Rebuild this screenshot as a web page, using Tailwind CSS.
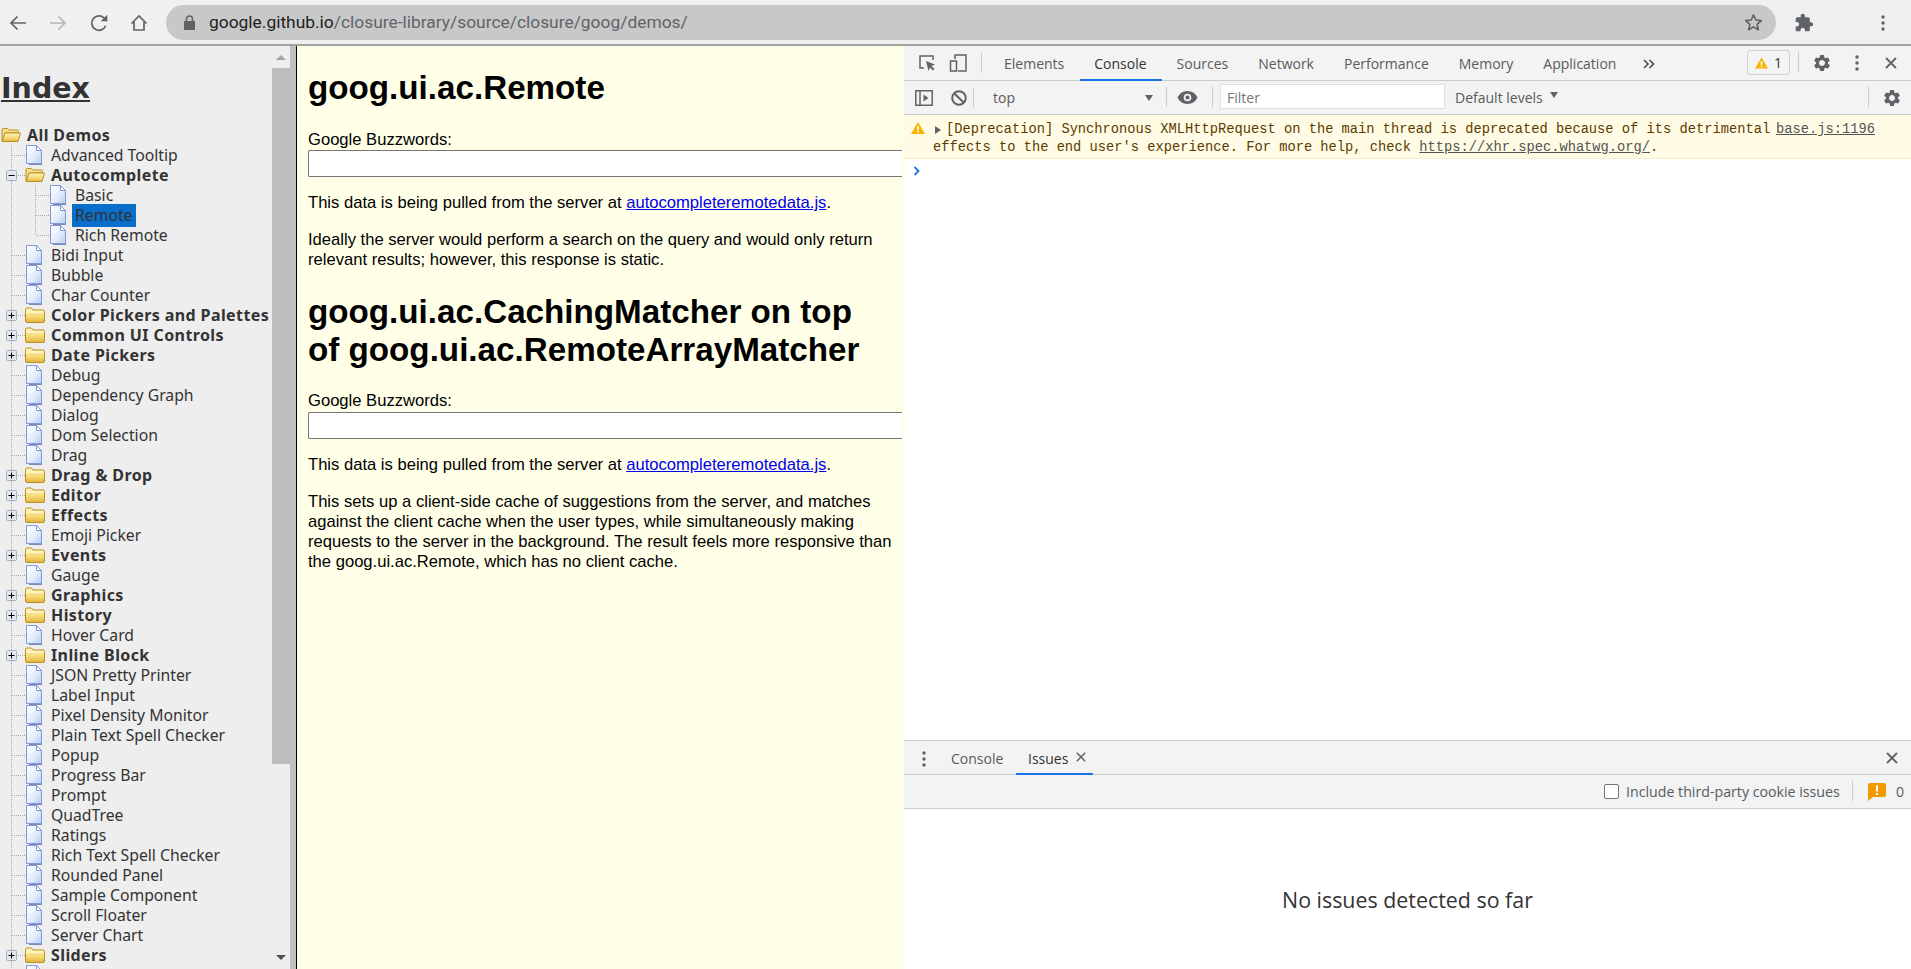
<!DOCTYPE html>
<html lang="en">
<head>
  <meta charset="UTF-8"/>
  <title>goog.ui.ac.Remote</title>
  <script src="https://cdn.jsdelivr.net/npm/@tailwindcss/browser@4"></script>
</head>
<body class="w-[1911px] h-[969px] overflow-hidden bg-white font-['Open_Sans',sans-serif]">

  <!-- shared icons -->
  <svg class="absolute w-0 h-0">
    <defs>
      <linearGradient id="pageFill" x1="0" y1="0" x2="1" y2="1">
        <stop offset="0" stop-color="#ffffff"/><stop offset="0.55" stop-color="#e4edfb"/><stop offset="1" stop-color="#b4cbf0"/>
      </linearGradient>
      <linearGradient id="folderFill" x1="0" y1="0" x2="0" y2="1">
        <stop offset="0" stop-color="#fff6c2"/><stop offset="0.6" stop-color="#f5d873"/><stop offset="1" stop-color="#e2b23c"/>
      </linearGradient>
    </defs>
    <symbol id="page" viewBox="0 0 17 20">
      <path d="M3 3h8l5 5v12H3z" fill="#7d88b5"/>
      <path d="M.5.5h10l5 5v13H.5z" fill="url(#pageFill)" stroke="#7f9ad6"/>
      <path d="M10.500.5v5h5z" fill="#fff" stroke="#7f9ad6"/>
    </symbol>
    <symbol id="folderOpen" viewBox="0 0 20 16">
      <path d="M1 14V3q0-1.500 1.500-1.500h4L8 3h8q1.500 0 1.500 1.500V6H4z" fill="#f7e08c" stroke="#b98f22"/>
      <path d="M1 14.500 4 6h15.500l-2.500 8.500z" fill="url(#folderFill)" stroke="#b98f22" stroke-linejoin="round"/>
    </symbol>
    <symbol id="folderClosed" viewBox="0 0 20 16">
      <path d="M.5 14V2.500q0-1.500 1.500-1.500h4.500L8 3h10q1.500 0 1.500 1.500V14q0 1.500-1.500 1.500H2Q.5 15.500.5 14z" fill="url(#folderFill)" stroke="#b98f22"/>
      <path d="M1 5h18" stroke="#fff8d0" stroke-width="1.500"/>
    </symbol>
    <symbol id="gear" viewBox="0 0 24 24">
      <path d="M19.14 12.94c.04-.3.06-.61.06-.94 0-.32-.02-.64-.07-.94l2.03-1.58a.49.49 0 0 0 .12-.61l-1.92-3.32a.488.488 0 0 0-.59-.22l-2.39.96c-.5-.38-1.03-.7-1.62-.94l-.36-2.54a.484.484 0 0 0-.48-.41h-3.84c-.24 0-.43.17-.47.41l-.36 2.54c-.59.24-1.13.57-1.62.94l-2.39-.96c-.22-.08-.47 0-.59.22L2.74 8.87c-.12.21-.08.47.12.61l2.03 1.58c-.05.3-.09.63-.09.94s.02.64.07.94l-2.03 1.58a.49.49 0 0 0-.12.61l1.92 3.32c.12.22.37.29.59.22l2.39-.96c.5.38 1.03.7 1.62.94l.36 2.54c.05.24.24.41.48.41h3.84c.24 0 .44-.17.47-.41l.36-2.54c.59-.24 1.13-.56 1.62-.94l2.39.96c.22.08.47 0 .59-.22l1.92-3.32c.12-.22.07-.47-.12-.61l-2.01-1.58zM12 15.6c-1.98 0-3.6-1.62-3.6-3.6s1.62-3.6 3.6-3.6 3.6 1.62 3.6 3.6-1.62 3.6-3.6 3.6z"/>
    </symbol>
    <symbol id="dots" viewBox="0 0 4 16">
      <circle cx="2" cy="2" r="1.700"/><circle cx="2" cy="8" r="1.700"/><circle cx="2" cy="14" r="1.700"/>
    </symbol>
    <symbol id="cross" viewBox="0 0 12 12">
      <path d="M1 1l10 10M11 1 1 11" stroke="currentColor" stroke-width="1.800" fill="none"/>
    </symbol>
    <symbol id="warnTri" viewBox="0 0 14 12">
      <path d="M7 0 14 12H0z" fill="#f4b400"/>
      <path d="M6.200 4h1.600v4.200H6.200zM6.200 9h1.600v1.500H6.200z" fill="#fff"/>
    </symbol>
  </svg>

  <!-- BROWSER TOOLBAR -->
  <div class="h-[46px] bg-[#f0f0f0] border-b-[2px] border-[#a3a3a3] flex items-center relative">
    <svg class="absolute left-[9px] top-[14px] w-[18px] h-[18px] text-[#5f6368]" viewBox="0 0 18 18" fill="none" stroke="currentColor" stroke-width="1.700"><path d="M17 9H2M8.500 2.500 2 9l6.500 6.500"/></svg>
    <svg class="absolute left-[49px] top-[14px] w-[18px] h-[18px] text-[#b5b5b5]" viewBox="0 0 18 18" fill="none" stroke="currentColor" stroke-width="1.700"><path d="M1 9h15M9.500 2.500 16 9l-6.500 6.500"/></svg>
    <svg class="absolute left-[89px] top-[13px] w-[20px] h-[20px] text-[#5f6368]" viewBox="0 0 18 18" fill="none" stroke="currentColor" stroke-width="1.600"><path d="M15 11.500A6.500 6.500 0 1 1 13.600 4.500L16 7"/><path d="M16.500 1.500V7.500H10.500" stroke="none" fill="currentColor"/></svg>
    <svg class="absolute left-[130px] top-[14px] w-[18px] h-[18px] text-[#5f6368]" viewBox="0 0 18 18" fill="none" stroke="currentColor" stroke-width="1.700"><path d="M1.500 9.500 9 2l7.500 7.500M4 8v8h10V8"/></svg>

    <div class="absolute left-[166px] top-[5px] w-[1610px] h-[35px] rounded-full bg-[#c8c8c8] flex items-center">
      <svg class="ml-[18px] w-[11px] h-[15px] text-[#5f6368]" viewBox="0 0 11 15" fill="currentColor"><path d="M0 6h11v9H0z"/><path d="M2.500 6V4a3 3 0 0 1 6 0v2" fill="none" stroke="currentColor" stroke-width="1.500"/></svg>
      <span class="ml-[14px] text-[17.400px] leading-none font-['Roboto',sans-serif] text-[#202124]">google.github.io<span class="text-[#5f6368]">/closure-library/source/closure/goog/demos/</span></span>
      <svg class="absolute right-[13px] top-[8px] w-[19px] h-[19px] text-[#5f6368]" viewBox="0 0 20 20" fill="none" stroke="currentColor" stroke-width="1.700" stroke-linejoin="round"><path d="m10 2 2.400 5.400 5.800.6-4.400 3.900 1.300 5.700-5.100-3-5.100 3 1.300-5.700L1.800 8l5.800-.6z"/></svg>
    </div>
    <svg class="absolute left-[1794px] top-[13px] w-[20px] h-[20px] text-[#5f6368]" viewBox="0 0 24 24" fill="currentColor"><path d="M20.500 11H19V7c0-1.100-.9-2-2-2h-4V3.500C13 2.120 11.880 1 10.500 1S8 2.120 8 3.500V5H4c-1.100 0-1.990.9-1.990 2v3.800H3.500c1.490 0 2.700 1.210 2.700 2.700s-1.210 2.700-2.700 2.700H2V20c0 1.100.9 2 2 2h3.800v-1.500c0-1.490 1.210-2.700 2.700-2.700 1.490 0 2.700 1.210 2.700 2.700V22H17c1.100 0 2-.9 2-2v-4h1.500c1.380 0 2.500-1.120 2.500-2.500S21.880 11 20.500 11z"/></svg>
    <svg class="absolute left-[1881px] top-[15px] w-[4px] h-[16px] fill-[#5f6368]"><use href="#dots"/></svg>
  </div>

  <div class="flex h-[923px]">

    <!-- LEFT: demo index -->
    <div class="w-[297px] shrink-0 flex bg-[#eeeeee] border-r border-black">
      <div class="w-[272px] shrink-0 overflow-hidden font-['Noto_Sans',sans-serif] text-[#333]">
        <h1 class="mt-[20px] mb-[13px] ml-px text-[28.500px] leading-[46px] font-bold underline font-['DejaVu_Sans',sans-serif]">Index</h1>
        <div id="tree"></div>
      </div>
      <div class="w-[18px] shrink-0 flex flex-col items-center">
        <div class="h-[22px] w-full flex items-center justify-center"><div class="w-0 h-0 border-x-[5px] border-x-transparent border-b-[5px] border-b-[#a3a3a3]"></div></div>
        <div class="h-[696px] w-full bg-[#bdbdbd]"></div>
        <div class="flex-1 w-full flex items-end justify-center pb-[9px]"><div class="w-0 h-0 border-x-[5px] border-x-transparent border-t-[5px] border-t-[#505050]"></div></div>
      </div>
      <div class="flex-1 bg-[#c0c0c0]"></div>
    </div>

    <!-- MIDDLE: demo page -->
    <div class="w-[607px] shrink-0 bg-[#ffffe8] overflow-hidden pl-[11px] text-black font-['Liberation_Sans',sans-serif] text-[16.600px] leading-[20px]">
      <h1 class="mt-[23px] text-[33.200px] leading-[38px] font-bold">goog.ui.ac.Remote</h1>
      <div class="mt-[23px]">Google Buzzwords:</div>
      <input class="block w-[594px] h-[27px] bg-white border border-r-0 border-[#767676] rounded-l-[2px]"/>
      <p class="mt-[16px]">This data is being pulled from the server at <a class="text-[#0000ee] underline">autocompleteremotedata.js</a>.</p>
      <p class="mt-[17px] w-[592px]">Ideally the server would perform a search on the query and would only return relevant results; however, this response is static.</p>
      <h1 class="mt-[23px] w-[575px] text-[33.200px] leading-[38px] font-bold">goog.ui.ac.CachingMatcher on top of goog.ui.ac.RemoteArrayMatcher</h1>
      <div class="mt-[22px]">Google Buzzwords:</div>
      <input class="block mt-px w-[594px] h-[27px] bg-white border border-r-0 border-[#767676] rounded-l-[2px]"/>
      <p class="mt-[16px]">This data is being pulled from the server at <a class="text-[#0000ee] underline">autocompleteremotedata.js</a>.</p>
      <p class="mt-[17px] w-[592px]">This sets up a client-side cache of suggestions from the server, and matches against the client cache when the user types, while simultaneously making requests to the server in the background. The result feels more responsive than the goog.ui.ac.Remote, which has no client cache.</p>
    </div>

    <!-- RIGHT: devtools -->
    <div class="flex-1 min-w-0 flex flex-col bg-white text-[14px] text-[#5a5a5a]">

      <!-- tab bar -->
      <div class="h-[35px] shrink-0 bg-[#f3f3f3] border-b border-[#cccccc] flex items-center relative">
        <svg class="ml-[14px] w-[19px] h-[19px] text-[#5f6368]" viewBox="0 0 19 19" fill="none" stroke="currentColor" stroke-width="1.500"><path d="M6 14H2V2h13v4"/><path d="m8 7 9 3.500-3.500 1.500 3 3-1.500 1.500-3-3L10.500 17z" fill="currentColor" stroke="none"/></svg>
        <svg class="ml-[12px] w-[19px] h-[20px] text-[#5f6368]" viewBox="0 0 19 20" fill="none" stroke="currentColor" stroke-width="1.500"><path d="M6 6V2h11v16H9"/><path d="M1.500 8h6v10h-6z"/></svg>
        <div class="w-px h-[20px] bg-[#ccc] ml-[13px]"></div>
        <div class="ml-[22px] flex gap-[30px] h-full items-center">
          <span>Elements</span>
          <span class="relative h-full flex items-center text-[#333]">Console<span class="absolute -left-[14px] -right-[15px] bottom-[-1px] h-[2px] bg-[#1a73e8]"></span></span>
          <span>Sources</span>
          <span>Network</span>
          <span>Performance</span>
          <span>Memory</span>
          <span>Application</span>
        </div>
        <svg class="absolute left-[739px] top-[13px] w-[12px] h-[10px] text-[#444]" viewBox="0 0 12 10" fill="none" stroke="currentColor" stroke-width="1.500"><path d="m1 1 4 4-4 4M6.500 1l4 4-4 4"/></svg>
        <div class="absolute left-[843px] top-[4px] w-[43px] h-[25px] border border-[#d0d0d0] rounded-[3px] flex items-center justify-center gap-[6px] text-[#333]">
          <svg class="w-[13px] h-[12px]"><use href="#warnTri"/></svg><span>1</span>
        </div>
        <div class="absolute left-[894px] top-[6px] w-px h-[20px] bg-[#ccc]"></div>
        <svg class="absolute left-[908px] top-[7px] w-[20px] h-[20px] fill-[#5f6368]"><use href="#gear"/></svg>
        <svg class="absolute left-[951px] top-[9px] w-[4px] h-[16px] fill-[#5f6368]"><use href="#dots"/></svg>
        <svg class="absolute left-[981px] top-[11px] w-[12px] h-[12px] text-[#5f6368]"><use href="#cross"/></svg>
      </div>

      <!-- console filter bar -->
      <div class="h-[34px] shrink-0 bg-[#f3f3f3] border-b border-[#cccccc] flex items-center relative">
        <svg class="ml-[11px] w-[18px] h-[16px] text-[#5f6368]" viewBox="0 0 18 16" fill="none" stroke="currentColor" stroke-width="1.500"><path d="M.8.800h16.400v14.400H.8zM5 1v14"/><path d="m8.500 4.500 5 3.500-5 3.500z" fill="currentColor" stroke="none"/></svg>
        <svg class="ml-[18px] w-[16px] h-[16px] text-[#5f6368]" viewBox="0 0 16 16" fill="none" stroke="currentColor" stroke-width="2"><circle cx="8" cy="8" r="6.800"/><path d="m3.200 3.200 9.600 9.600"/></svg>
        <div class="w-px h-[20px] bg-[#ccc] ml-[6px]"></div>
        <span class="ml-[19px]">top</span>
        <div class="absolute left-[241px] top-[14px] w-0 h-0 border-x-[4px] border-x-transparent border-t-[6px] border-t-[#5f6368]"></div>
        <div class="absolute left-[262px] top-[6px] w-px h-[20px] bg-[#ccc]"></div>
        <svg class="absolute left-[273px] top-[9px] w-[21px] h-[15px] fill-[#5f6368]" viewBox="0 0 21 15"><path d="M10.500 1C6 1 2.200 3.800.5 7.500 2.200 11.200 6 14 10.500 14s8.300-2.800 10-6.500C18.800 3.800 15 1 10.500 1z"/><circle cx="10.500" cy="7.500" r="3.800" fill="#f3f3f3"/><circle cx="10.500" cy="7.500" r="2"/></svg>
        <div class="absolute left-[308px] top-[6px] w-px h-[20px] bg-[#ccc]"></div>
        <div class="absolute left-[316px] top-[3px] w-[225px] h-[25px] bg-white border border-[#e0e0e0] pl-[6px] pt-px flex items-center text-[#757575]">Filter</div>
        <span class="absolute left-[551px] top-[6px]">Default levels</span>
        <div class="absolute left-[646px] top-[11px] w-0 h-0 border-x-[4px] border-x-transparent border-t-[6px] border-t-[#5f6368]"></div>
        <div class="absolute left-[964px] top-[6px] w-px h-[20px] bg-[#ccc]"></div>
        <svg class="absolute left-[978px] top-[7px] w-[20px] h-[20px] fill-[#5f6368]"><use href="#gear"/></svg>
      </div>

      <!-- console output -->
      <div class="h-[625px] shrink-0 flex flex-col font-['Liberation_Mono',monospace] text-[13.740px] leading-[18px]">
        <div class="h-[44px] bg-[#fffbe5] border-b border-[#f5eecb] relative text-[#5c3b00] pt-[6px] pl-[29px]">
          <svg class="absolute left-[7px] top-[7px] w-[14px] h-[12px]"><use href="#warnTri"/></svg>
          <div class="absolute left-[31px] top-[11px] w-0 h-0 border-y-[4px] border-y-transparent border-l-[6px] border-l-[#5f6368]"></div>
          <div class="pl-[13px] whitespace-nowrap">[Deprecation] Synchronous XMLHttpRequest on the main thread is deprecated because of its detrimental</div>
          <div class="whitespace-nowrap">effects to the end user's experience. For more help, check <a class="underline text-[#555]">https://xhr.spec.whatwg.org/</a>.</div>
          <a class="absolute right-[36px] top-[6px] underline text-[#555]">base.js:1196</a>
        </div>
        <svg class="ml-[9px] mt-[7px] w-[8px] h-[10px] text-[#1a73e8]" viewBox="0 0 8 10" fill="none" stroke="currentColor" stroke-width="1.800"><path d="m1.500 1 4 4-4 4"/></svg>
      </div>

      <!-- drawer tabs -->
      <div class="h-[35px] shrink-0 bg-[#f3f3f3] border-y border-[#cccccc] flex items-center relative">
        <svg class="absolute left-[18px] top-[10px] w-[4px] h-[16px] fill-[#5f6368]"><use href="#dots"/></svg>
        <span class="absolute left-[47px] top-[7px]">Console</span>
        <span class="absolute left-[124px] top-[7px] text-[#333]">Issues</span>
        <svg class="absolute left-[172px] top-[11px] w-[10px] h-[10px] text-[#5f6368]"><use href="#cross"/></svg>
        <div class="absolute left-[112px] bottom-[-1px] w-[77px] h-[2px] bg-[#1a73e8]"></div>
        <svg class="absolute left-[982px] top-[11px] w-[12px] h-[12px] text-[#5f6368]"><use href="#cross"/></svg>
      </div>

      <!-- issues toolbar -->
      <div class="h-[34px] shrink-0 bg-[#f1f3f4] border-b border-[#cccccc] flex items-center justify-end relative">
        <div class="absolute left-[700px] top-[9px] w-[15px] h-[15px] bg-white border border-[#767676] rounded-[2px]"></div>
        <span class="absolute left-[722px] top-[6px] text-[14.200px]">Include third-party cookie issues</span>
        <div class="absolute left-[948px] top-[6px] w-px h-[20px] bg-[#ccc]"></div>
        <svg class="absolute left-[964px] top-[8px] w-[18px] h-[18px]" viewBox="0 0 18 18"><path d="M2 0h14q2 0 2 2v10q0 2-2 2H5l-5 4V2q0-2 2-2z" fill="#f29900"/><path d="M8 2.500h2v6H8zM8 10h2v2H8z" fill="#fff"/></svg>
        <span class="absolute left-[992px] top-[6px]">0</span>
      </div>

      <!-- issues empty state -->
      <div class="flex-1 pt-[77px] text-center text-[21.400px] leading-[27px] text-[#333]">No issues detected so far</div>
    </div>
  </div>

  <script>
    // Demo index rows: [label, kind] kind: f folder, o open folder, p page, s/r/e sub pages
    const rows = [
      ['Advanced Tooltip','p'],['Autocomplete','o'],['Basic','s'],['Remote','r'],['Rich Remote','e'],
      ['Bidi Input','p'],['Bubble','p'],['Char Counter','p'],['Color Pickers and Palettes','f'],
      ['Common UI Controls','f'],['Date Pickers','f'],['Debug','p'],['Dependency Graph','p'],['Dialog','p'],
      ['Dom Selection','p'],['Drag','p'],['Drag &amp; Drop','f'],['Editor','f'],['Effects','f'],['Emoji Picker','p'],
      ['Events','f'],['Gauge','p'],['Graphics','f'],['History','f'],['Hover Card','p'],['Inline Block','f'],
      ['JSON Pretty Printer','p'],['Label Input','p'],['Pixel Density Monitor','p'],['Plain Text Spell Checker','p'],
      ['Popup','p'],['Progress Bar','p'],['Prompt','p'],['QuadTree','p'],['Ratings','p'],['Rich Text Spell Checker','p'],
      ['Rounded Panel','p'],['Sample Component','p'],['Scroll Floater','p'],['Server Chart','p'],['Sliders','f'],['Spinner','p'],
    ];
    const dotted = 'stroke="#a8a8a8" stroke-dasharray="1 1"';
    const box = sign => `<rect x="6.500" y="5.500" width="10" height="10" rx="1" fill="#e4e8ee" stroke="#9fb0c2"/><path d="${sign}" stroke="#000"/>`;
    const PLUS = 'M8.500 10.500h6M11.500 7.500v6', MINUS = 'M8.500 10.500h6';

    function connector(kind) {
      if (kind === 's' || kind === 'r' || kind === 'e') {
        const end = kind === 'e' ? 10 : 20;
        return `<svg class="w-[50px] h-5 shrink-0" viewBox="0 0 50 20"><path d="M11.500 0v20" ${dotted}/><path d="M35.500 0v${end}M36 10.500h14" ${dotted}/></svg>`;
      }
      const mark = kind === 'f' ? box(PLUS) : kind === 'o' ? box(MINUS) : '';
      return `<svg class="w-[26px] h-5 shrink-0" viewBox="0 0 26 20"><path d="M11.500 0v20M12 10.500h14" ${dotted}/>${mark}</svg>`;
    }
    function icon(kind) {
      if (kind === 'f') return '<svg class="w-[20px] h-[16px] shrink-0 -ml-px"><use href="#folderClosed"/></svg><span class="w-[6px] shrink-0"></span>';
      if (kind === 'o') return '<svg class="w-[20px] h-[16px] shrink-0 -ml-px"><use href="#folderOpen"/></svg><span class="w-[6px] shrink-0"></span>';
      return '<svg class="w-[17px] h-5 shrink-0"><use href="#page"/></svg><span class="w-[8px] shrink-0"></span>';
    }
    function label(name, kind) {
      if (kind === 'r') return `<span class="-ml-[3px] px-[3px] leading-[23px] bg-[#0a6ecb]">${name}</span>`;
      if (kind === 'f' || kind === 'o') return `<span class="font-bold text-[16px] tracking-[0.4px]">${name}</span>`;
      return `<span class="pt-[2px]">${name}</span>`;
    }
    let html = '<div class="flex items-center h-5 text-[15.750px] whitespace-nowrap"><svg class="ml-px w-[20px] h-[16px] shrink-0"><use href="#folderOpen"/></svg><span class="ml-[6px] font-bold text-[16px] tracking-[0.4px]">All Demos</span></div>';
    for (const [name, kind] of rows) {
      html += `<div class="flex items-center h-5 text-[15.750px] whitespace-nowrap">${connector(kind)}${icon(kind)}${label(name, kind)}</div>`;
    }
    document.getElementById('tree').innerHTML = html;
  </script>
</body>
</html>
